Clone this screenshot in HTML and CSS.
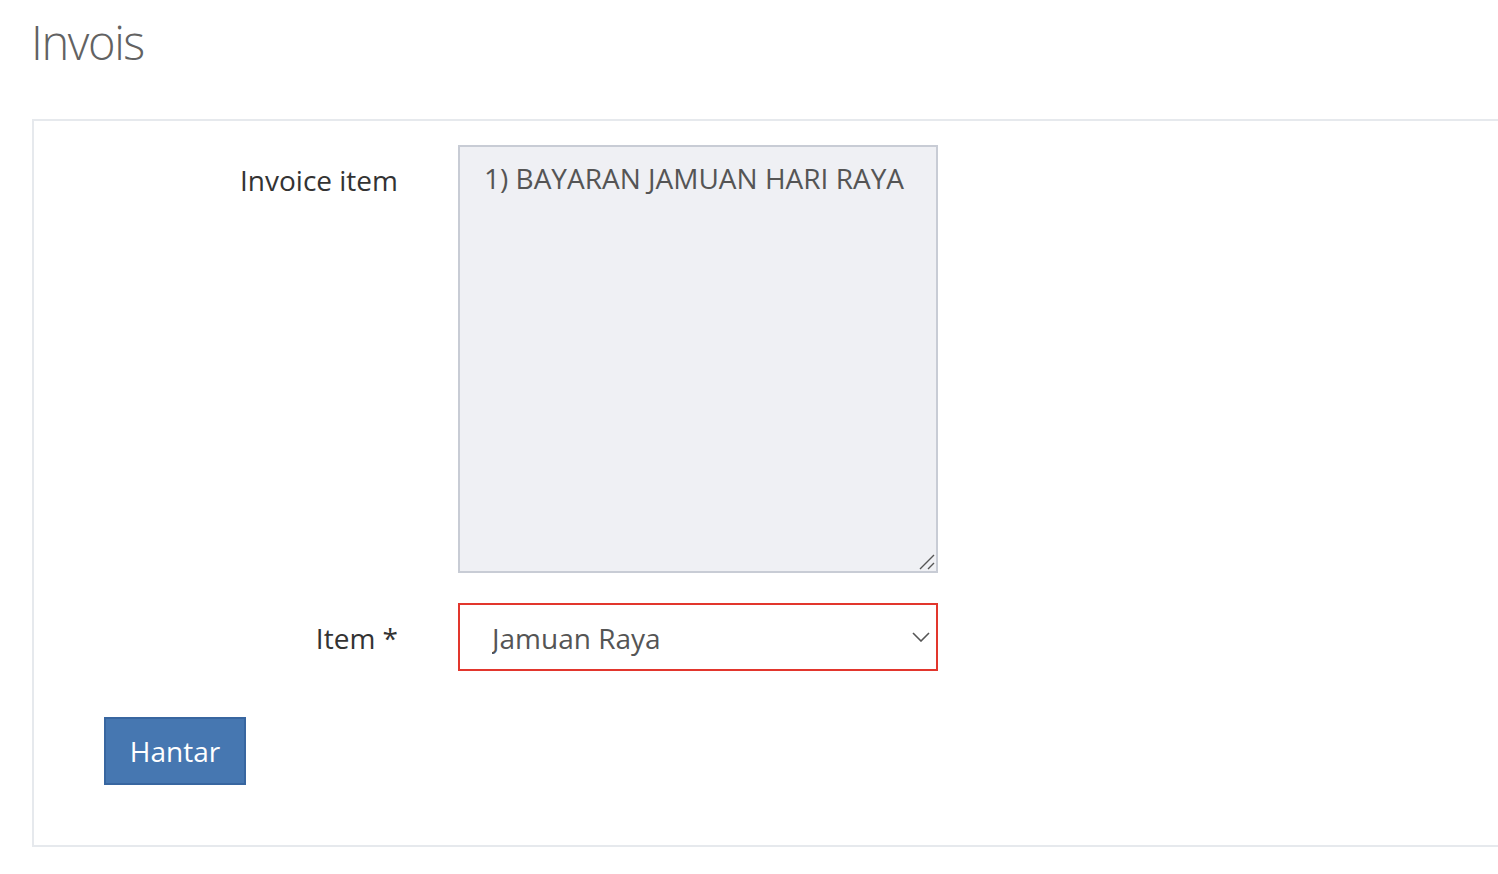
FILE: index.html
```html
<!DOCTYPE html>
<html lang="ms">
<head>
<meta charset="utf-8">
<title>Invois</title>
<link rel="stylesheet" href="styles.css">
</head>
<body>
<h1 class="page-title">Invois</h1>
<form class="panel">
  <div class="form-grid">
    <label class="field-label" for="invoice-item">Invoice item</label>
    <div class="textarea-wrap">
      <textarea id="invoice-item" class="field-textarea" readonly>1) BAYARAN JAMUAN HARI RAYA</textarea>
      <svg class="resize-grip" width="16" height="16" viewBox="0 0 16 16" aria-hidden="true">
        <path d="M1 15 L15 1 M9 15 L15 9" fill="none" stroke="#555" stroke-width="1.4"/>
      </svg>
    </div>

    <label class="field-label field-label--select" for="item">Item *</label>
    <div class="select-wrap">
      <select id="item" class="field-select">
        <option>Jamuan Raya</option>
      </select>
      <svg class="select-chevron" width="18" height="10" viewBox="0 0 18 10" aria-hidden="true">
        <path d="M1 1 L9 9 L17 1" fill="none" stroke="#555" stroke-width="1.6"/>
      </svg>
    </div>
  </div>
  <div class="actions">
    <button type="button" class="btn-primary">Hantar</button>
  </div>
</form>
</body>
</html>
```
FILE: styles.css
```css
html, body {
  margin: 0;
  padding: 0;
  background: #ffffff;
  font-family: "Open Sans", "Liberation Sans", sans-serif;
}

.page-title {
  margin: 10px 0 0 31px;
  font-size: 47px;
  font-weight: 300;
  line-height: 64px;
  color: #626262;
  letter-spacing: -1.4px;
}

.panel {
  margin: 45px 0 0 32px;
  border: 2px solid #e6e9ed;
  border-right: none;
  padding: 24px 0 60px 0;
  box-sizing: border-box;
}

.form-grid {
  display: grid;
  grid-template-columns: 364px 480px;
  column-gap: 60px;
  row-gap: 30px;
}

.field-label {
  text-align: right;
  font-size: 28px;
  color: #333333;
  line-height: 38px;
  padding-top: 16px;
}

.field-label--select {
  padding-top: 16px;
}

.textarea-wrap {
  position: relative;
  width: 480px;
  height: 428px;
}

.field-textarea {
  display: block;
  width: 480px;
  height: 428px;
  box-sizing: border-box;
  background: #eff0f4;
  border: 2px solid #c8ccd5;
  border-radius: 0;
  padding: 12px 24px;
  font-family: "Open Sans", "Liberation Sans", sans-serif;
  font-size: 28px;
  line-height: 38px;
  color: #555555;
  resize: none;
  margin: 0;
  outline: none;
}

.resize-grip {
  position: absolute;
  right: 3px;
  bottom: 3px;
  pointer-events: none;
}

.select-wrap {
  position: relative;
  width: 480px;
  height: 68px;
}

.field-select {
  appearance: none;
  -webkit-appearance: none;
  width: 100%;
  height: 100%;
  box-sizing: border-box;
  border: 2px solid #e2362d;
  border-radius: 0;
  background: #ffffff;
  padding: 2px 40px 0 32px;
  font-family: "Open Sans", "Liberation Sans", sans-serif;
  font-size: 28px;
  color: #555555;
  margin: 0;
  outline: none;
}

.select-chevron {
  position: absolute;
  right: 8px;
  top: 29px;
  pointer-events: none;
}

.actions {
  padding: 46px 0 0 70px;
}

.btn-primary {
  display: block;
  width: 142px;
  height: 68px;
  box-sizing: border-box;
  background: #4677b1;
  border: 2px solid #3866a0;
  border-radius: 0;
  color: #ffffff;
  font-family: "Open Sans", "Liberation Sans", sans-serif;
  font-size: 28px;
  padding: 0;
  margin: 0;
}
```
